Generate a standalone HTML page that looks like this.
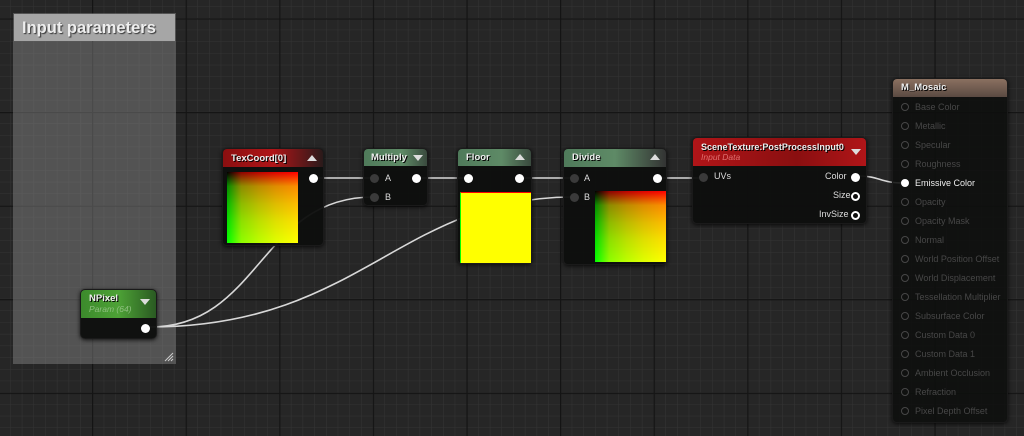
<!DOCTYPE html>
<html><head><meta charset="utf-8"><style>
*{margin:0;padding:0;box-sizing:border-box}
body{width:1024px;height:436px;overflow:hidden;background:#262626;font-family:"Liberation Sans",sans-serif;position:relative}
.abs{position:absolute}
.node{position:absolute;background:rgba(14,15,14,0.96);border-radius:5px;box-shadow:0 1px 4px rgba(0,0,0,.8);border:1px solid #1a1a1a}
.hdr{position:absolute;left:0;right:0;top:0;border-radius:4px 4px 0 0;color:#eee;font-weight:bold;font-size:9.5px;padding-left:8px;text-shadow:1px 1px 0 #000;white-space:nowrap}
.pin{position:absolute;width:9px;height:9px;border-radius:50%;background:#fff}
.pin.d{background:#3a3a3a}
.lbl{position:absolute;font-size:9px;color:#ddd}
.tri{position:absolute;width:0;height:0;border-left:5px solid transparent;border-right:5px solid transparent}
.up{border-bottom:6px solid #ddd}
.dn{border-top:6px solid #ddd}
.ring{position:absolute;width:9px;height:9px;border-radius:50%;border:2px solid #fff}
.mrow{position:absolute;left:8px;font-size:9px;color:#474747}
.mrow i{display:inline-block;width:8px;height:8px;border:1.5px solid #474747;border-radius:50%;margin-right:6px;vertical-align:-1px}
.grad{position:absolute;background:linear-gradient(90deg,#000,#8c0000 20%,#bc0000 45%,#e00000 70%,#ff0000)}
.grad::after{content:"";position:absolute;inset:0;background:linear-gradient(180deg,#000,#008c00 20%,#00bc00 45%,#00e000 70%,#00ff00);mix-blend-mode:screen}
</style></head><body>
<svg class="abs" style="left:0;top:0" width="1024" height="436">
<defs>
<pattern id="mi" width="11.7" height="11.7" patternUnits="userSpaceOnUse" x="-1.6" y="6.3"><path d="M0 0H11.7M0 0V11.7" stroke="#343434" stroke-width="1"/></pattern>
<pattern id="ma" width="93.6" height="93.6" patternUnits="userSpaceOnUse" x="-1.6" y="18.3"><path d="M0 0.5H93.6M0.5 0V93.6" stroke="#141414" stroke-width="1.5"/></pattern>
</defs>
<rect width="1024" height="436" fill="url(#mi)"/>
<rect width="1024" height="436" fill="url(#ma)"/>
</svg>
<!-- comment box -->
<div class="abs" style="left:13px;top:13px;width:163px;height:351px;background:rgba(140,140,140,0.45)"></div>
<div class="abs" style="left:14px;top:14px;width:161px;height:27px;background:#a6a6a6;color:#eee;font-weight:bold;font-size:16.5px;padding:5px 0 0 8px;text-shadow:1px 1px 1px #333">Input parameters</div>
<svg class="abs" style="left:164px;top:352px" width="10" height="10"><path d="M9 1L1 9M9 4L4 9M9 7L7 9" stroke="#ccc"/></svg>
<!-- wires -->
<svg class="abs" style="left:0;top:0" width="1024" height="436" fill="none" stroke="#d8d8d8" stroke-width="1.6">
<path d="M318 178H373"/><path d="M420 178H467"/><path d="M524 178H573"/><path d="M661 178H703"/>
<path d="M858 176C880 176 880 183 904 183"/>
<path d="M150 327C260 327 260 197 373 197"/>
<path d="M150 327C360 327 400 197 573 197"/>
</svg>
<!-- TexCoord -->
<div class="node" style="left:222px;top:148px;width:102px;height:98px">
<div class="hdr" style="height:18px;background:linear-gradient(90deg,#8a0f10,#b01518 50%,#2a1a1a);padding-top:4px">TexCoord[0]</div>
<div class="tri up" style="right:6px;top:6px"></div>
<div class="grad" style="left:4px;top:23px;width:71px;height:71px"></div>
<div class="pin" style="left:86px;top:25px"></div>
</div>
<!-- Multiply -->
<div class="node" style="left:363px;top:148px;width:65px;height:58px">
<div class="hdr" style="height:17px;background:linear-gradient(90deg,#4f7a5a,#5e8a66 60%,#3a4a3e);padding-top:3px;padding-left:7px">Multiply</div>
<div class="tri dn" style="right:4px;top:6px"></div>
<div class="pin d" style="left:6px;top:25px"></div><div class="lbl" style="left:21px;top:24px">A</div>
<div class="pin d" style="left:6px;top:44px"></div><div class="lbl" style="left:21px;top:43px">B</div>
<div class="pin" style="left:48px;top:25px"></div>
</div>
<!-- Floor -->
<div class="node" style="left:457px;top:148px;width:75px;height:116px">
<div class="hdr" style="height:17px;background:linear-gradient(90deg,#4f7a5a,#5e8a66 60%,#3a4a3e);padding-top:3px">Floor</div>
<div class="tri up" style="right:6px;top:5px"></div>
<div class="pin" style="left:6px;top:25px"></div>
<div class="pin" style="left:57px;top:25px"></div>
<div class="abs" style="left:2px;top:43px;width:71px;height:71px;background:#ffff00;border-top:1px solid #f00;border-left:1px solid #0f0"></div>
</div>
<!-- Divide -->
<div class="node" style="left:563px;top:148px;width:104px;height:117px">
<div class="hdr" style="height:18px;background:linear-gradient(90deg,#4f7a5a,#5e8a66 50%,#333 100%);padding-top:3px">Divide</div>
<div class="tri up" style="right:6px;top:5px"></div>
<div class="pin d" style="left:6px;top:25px"></div><div class="lbl" style="left:20px;top:24px">A</div>
<div class="pin d" style="left:6px;top:44px"></div><div class="lbl" style="left:20px;top:43px">B</div>
<div class="pin" style="left:89px;top:25px"></div>
<div class="grad" style="left:31px;top:42px;width:71px;height:71px"></div>
</div>
<!-- SceneTexture -->
<div class="node" style="left:692px;top:137px;width:175px;height:87px">
<div class="hdr" style="height:28px;background:linear-gradient(90deg,#b01518,#8a0f10 60%,#b01518);padding-top:4px;font-size:9px">SceneTexture:PostProcessInput0<br><span style="font-weight:normal;font-style:italic;font-size:8.5px;color:#e07070;text-shadow:none">Input Data</span></div>
<div class="tri dn" style="right:5px;top:11px"></div>
<div class="pin d" style="left:6px;top:35px"></div><div class="lbl" style="left:21px;top:33px">UVs</div>
<div class="lbl" style="left:132px;top:33px">Color</div><div class="pin" style="left:158px;top:35px"></div>
<div class="lbl" style="left:140px;top:52px">Size</div><div class="ring" style="left:158px;top:54px"></div>
<div class="lbl" style="left:126px;top:71px">InvSize</div><div class="ring" style="left:158px;top:73px"></div>
</div>
<!-- NPixel -->
<div class="node" style="left:80px;top:289px;width:77px;height:50px">
<div class="hdr" style="height:28px;background:linear-gradient(90deg,#3c8a2c,#4da236 50%,#2a5a22);padding-top:3px">NPixel<br><span style="font-weight:normal;font-style:italic;font-size:8.5px;color:#8fc080;text-shadow:none">Param (64)</span></div>
<div class="tri dn" style="right:6px;top:9px"></div>
<div class="pin" style="left:60px;top:34px"></div>
</div>
<!-- M_Mosaic -->
<div class="node" style="left:892px;top:78px;width:116px;height:345px;background:rgba(14,15,14,0.88)">
<div class="hdr" style="height:18px;background:linear-gradient(180deg,#8a7060,#5a4a42);padding-top:3px">M_Mosaic</div>
<div class="mrow" style="top:23px"><i></i>Base Color</div>
<div class="mrow" style="top:42px"><i></i>Metallic</div>
<div class="mrow" style="top:61px"><i></i>Specular</div>
<div class="mrow" style="top:80px"><i></i>Roughness</div>
<div class="mrow" style="top:99px;color:#eee"><i style="background:#fff;border-color:#fff"></i>Emissive Color</div>
<div class="mrow" style="top:118px"><i></i>Opacity</div>
<div class="mrow" style="top:137px"><i></i>Opacity Mask</div>
<div class="mrow" style="top:156px"><i></i>Normal</div>
<div class="mrow" style="top:175px"><i></i>World Position Offset</div>
<div class="mrow" style="top:194px"><i></i>World Displacement</div>
<div class="mrow" style="top:213px"><i></i>Tessellation Multiplier</div>
<div class="mrow" style="top:232px"><i></i>Subsurface Color</div>
<div class="mrow" style="top:251px"><i></i>Custom Data 0</div>
<div class="mrow" style="top:270px"><i></i>Custom Data 1</div>
<div class="mrow" style="top:289px"><i></i>Ambient Occlusion</div>
<div class="mrow" style="top:308px"><i></i>Refraction</div>
<div class="mrow" style="top:327px"><i></i>Pixel Depth Offset</div>
</div>
</body></html>
